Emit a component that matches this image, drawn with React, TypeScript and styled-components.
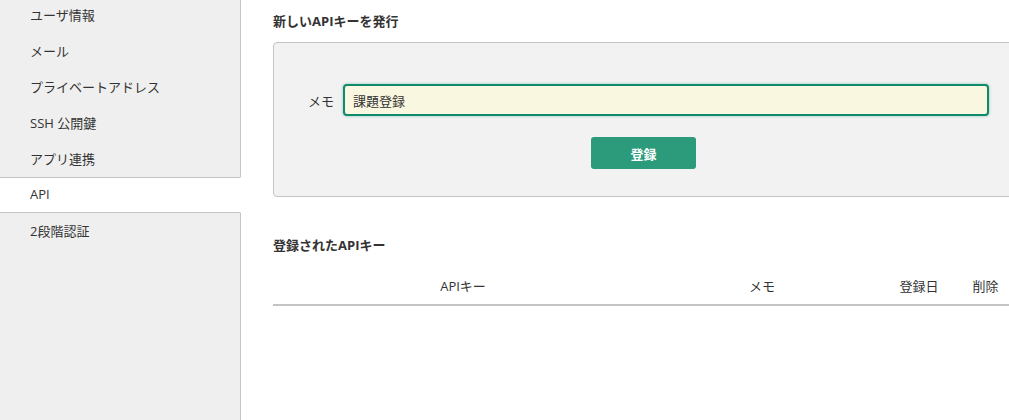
import React from "react";
import styled, { createGlobalStyle } from "styled-components";

const Global = createGlobalStyle`
  html, body { margin: 0; padding: 0; background: #fff; overflow: hidden; }
  body {
    font-family: "Open Sans", "Noto Sans CJK JP", sans-serif;
    font-size: 13px;
    color: #333;
  }
`;

const Page = styled.div`
  display: flex;
  align-items: flex-start;
  width: 1009px;
  height: 420px;
  overflow: hidden;
`;

const Sidebar = styled.nav`
  width: 241px;
  flex: none;
  align-self: stretch;
  display: flex;
  flex-direction: column;
  margin-top: -3px;
`;

const NavItem = styled.div<{ $active?: boolean }>`
  height: 36px;
  box-sizing: border-box;
  display: flex;
  align-items: center;
  padding: 0 0 2px 30px;
  background: ${(p) => (p.$active ? "#fff" : "#efefef")};
  border-right: 1px solid ${(p) => (p.$active ? "#fff" : "#c4c4c4")};
  border-top: ${(p) => (p.$active ? "1px solid #c4c4c4" : "none")};
  border-bottom: ${(p) => (p.$active ? "1px solid #c4c4c4" : "none")};
  color: #333;
  font-size: 13px;
`;

const SidebarFill = styled.div`
  flex: 1;
  background: #efefef;
  border-right: 1px solid #c4c4c4;
`;

const Main = styled.main`
  width: 741px;
  flex: none;
  margin-left: 32px;
  display: flex;
  flex-direction: column;
`;

const Heading = styled.h2`
  margin: 0;
  font-size: 13px;
  font-weight: bold;
  color: #333;
  line-height: 20px;
`;

const FirstHeading = styled(Heading)`
  margin-top: 11px;
`;

const Panel = styled.div`
  margin-top: 11px;
  height: 155px;
  box-sizing: border-box;
  background: #f2f2f2;
  border: 1px solid #c4c4c4;
  border-radius: 4px;
  display: flex;
  flex-direction: column;
  align-items: center;
  padding: 41px 24px 0 0;
`;

const FormRow = styled.div`
  display: flex;
  align-items: center;
  align-self: stretch;
  padding-left: 34px;
`;

const Label = styled.label`
  width: 35px;
  flex: none;
  font-size: 13px;
  color: #333;
`;

const Input = styled.input`
  flex: 1;
  height: 32px;
  box-sizing: border-box;
  background: #faf7e0;
  border: 2px solid #0f8a6c;
  border-radius: 4px;
  box-shadow: 0 0 3px rgba(15, 138, 108, 0.45);
  padding: 0 8px;
  font-family: "Open Sans", "Noto Sans CJK JP", sans-serif;
  font-size: 13px;
  color: #333;
  outline: none;
`;

const Button = styled.button`
  margin-top: 21px;
  margin-left: 24px;
  width: 105px;
  height: 32px;
  border: none;
  border-radius: 3px;
  background: #2c9b7b;
  color: #fff;
  font-family: "Open Sans", "Noto Sans CJK JP", sans-serif;
  font-size: 13px;
  font-weight: bold;
`;

const SecondHeading = styled(Heading)`
  margin-top: 38px;
`;

const Table = styled.table`
  margin-top: 12px;
  width: 100%;
  border-collapse: collapse;
`;

const Th = styled.th<{ $w?: number; $pr?: number }>`
  font-weight: normal;
  font-size: 13px;
  color: #333;
  height: 37px;
  padding: 0 ${(p) => p.$pr ?? 0}px 0 0;
  border-bottom: 2px solid #c4c4c4;
  text-align: center;
  width: ${(p) => (p.$w ? `${p.$w}px` : "auto")};
`;

const items = [
  "ユーザ情報",
  "メール",
  "プライベートアドレス",
  "SSH 公開鍵",
  "アプリ連携",
  "API",
  "2段階認証",
];

export default function App() {
  return (
    <>
      <Global />
      <Page>
        <Sidebar>
          {items.map((t) => (
            <NavItem key={t} $active={t === "API"}>
              {t}
            </NavItem>
          ))}
          <SidebarFill />
        </Sidebar>
        <Main>
          <FirstHeading>新しいAPIキーを発行</FirstHeading>
          <Panel>
            <FormRow>
              <Label>メモ</Label>
              <Input defaultValue="課題登録" />
            </FormRow>
            <Button>登録</Button>
          </Panel>
          <SecondHeading>登録されたAPIキー</SecondHeading>
          <Table>
            <thead>
              <tr>
                <Th $w={380}>APIキー</Th>
                <Th $w={218}>メモ</Th>
                <Th $w={96}>登録日</Th>
                <Th $pr={10}>削除</Th>
              </tr>
            </thead>
          </Table>
        </Main>
      </Page>
    </>
  );
}
